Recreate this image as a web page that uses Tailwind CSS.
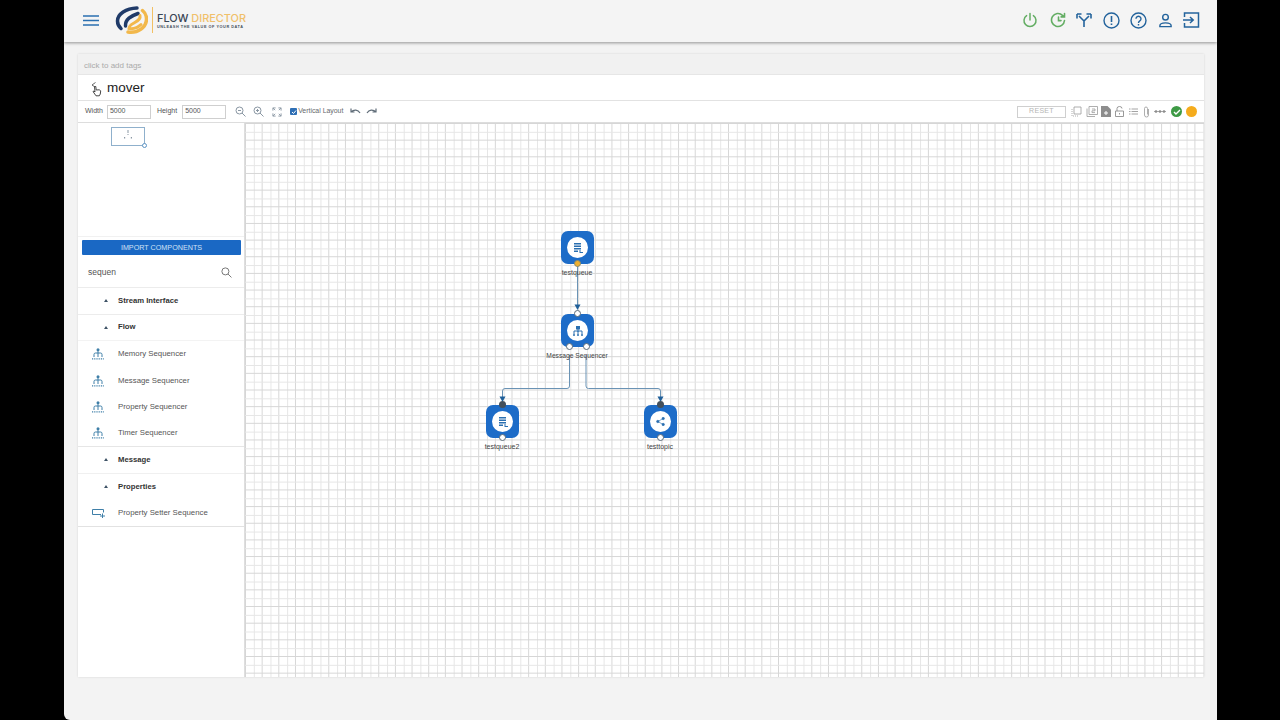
<!DOCTYPE html>
<html lang="en">
<head>
    <meta charset="UTF-8">
    <meta name="viewport" content="width=device-width,initial-scale=1.0">
    <title>Flow Director</title>
    <script src="https://cdn.jsdelivr.net/npm/@tailwindcss/browser@4"></script>
</head>

<body class="bg-black h-[720px] overflow-hidden font-['Liberation_Sans',sans-serif]">
<div class="ml-[64px] w-[1153px] h-[720px] bg-[#f3f3f3] rounded-bl-md flex flex-col">

    <!-- Top bar -->
    <header class="h-[42px] shrink-0 bg-[#f4f4f4] shadow-[0_1px_3px_rgba(0,0,0,0.4)] flex items-center pl-[19px] pr-[17px] pb-[2px]">
        <svg class="w-[16px] h-[11px]" viewBox="0 0 16 11" fill="none" stroke="#2a6fb0" stroke-width="1.5">
            <path d="M0 1h16M0 5.500h16M0 10h16"/>
        </svg>
        <svg class="ml-[16px] w-[33px] h-[28px]" viewBox="0 0 33 28" fill="none" stroke-linecap="round">
            <path d="M22 2C11 2.500 2.500 8 2.500 15c0 3 1.200 5.500 3.500 7.500" stroke="#1f3a68" stroke-width="3.500"/>
            <path d="M23 7.500C16 10 10 13 10.500 20" stroke="#1f3a68" stroke-width="3.500"/>
            <path d="M13 26c10 1.500 18.500-5 18.500-13 0-3.500-1.500-6.500-4-8.500" stroke="#f2b84b" stroke-width="3.500"/>
            <path d="M25 9.500c1 4-3 6-6 7.500-3 1.500-5 3-5 5.500 4 .5 9-1 12-4" stroke="#f2b84b" stroke-width="3"/>
        </svg>
        <div class="ml-[4px] w-px h-[26px] bg-[#f2c063]"></div>
        <div class="ml-[4px] flex flex-col">
            <div class="font-['Inter',sans-serif] font-medium text-[10.900px] leading-[12px] mt-[1px] whitespace-nowrap"><span class="text-[#3a4654]">FLOW</span> <span class="text-[#f0c06a]">DIRECTOR</span></div>
            <div class="text-[3.800px] leading-[5px] mt-[1px] font-bold tracking-[0.55px] text-[#44505c] whitespace-nowrap">UNLEASH THE VALUE OF YOUR DATA</div>
        </div>
        <div class="ml-auto flex items-center gap-[10.5px]">
            <!-- power -->
            <svg class="-ml-[1px] mr-[1px] w-[16px] h-[16px]" viewBox="0 0 16 16" fill="none" stroke="#63ad63" stroke-width="1.5" stroke-linecap="round">
                <path d="M8 1.500v6.500M4.600 3.600a6 6 0 1 0 6.800 0"/>
            </svg>
            <!-- restart -->
            <svg class="w-[16px] h-[16px]" viewBox="0 0 16 16" fill="none" stroke="#63ad63" stroke-width="1.600" stroke-linecap="round">
                <path d="M14.500 8.500a6.500 6.500 0 1 1-2-5.200L14 4.500M14.500 1.500v3.400h-3.400M8.500 5v3.600h2.500"/>
            </svg>
            <!-- split -->
            <svg class="w-[16px] h-[16px]" viewBox="0 0 16 16" fill="none" stroke="#23639c" stroke-width="1.600">
                <path d="M8 15V9L3 4M8 9l5-5M1 2h4.500M1 2v4.500M15 2h-4.500M15 2v4.500"/>
            </svg>
            <!-- alert -->
            <svg class="w-[17px] h-[17px]" viewBox="0 0 17 17" fill="none" stroke="#23639c" stroke-width="1.400">
                <circle cx="8.500" cy="8.500" r="7.500"/>
                <path d="M8.500 4v6M8.500 11.500v1.600" stroke-width="1.600"/>
            </svg>
            <!-- help -->
            <svg class="w-[17px] h-[17px]" viewBox="0 0 17 17" fill="none" stroke="#23639c" stroke-width="1.400">
                <circle cx="8.500" cy="8.500" r="7.500"/>
                <path d="M6 6.800a2.500 2.500 0 1 1 3.800 2.100c-.9.600-1.300 1-1.300 2M8.500 12v1.400"/>
            </svg>
            <!-- user -->
            <svg class="w-[15px] h-[15px]" viewBox="0 0 16 16" fill="none" stroke="#23639c" stroke-width="1.500">
                <circle cx="8" cy="4.500" r="3"/>
                <path d="M2 14.500v-1c0-2 2.500-3 6-3s6 1 6 3v1z"/>
            </svg>
            <!-- logout -->
            <svg class="w-[17px] h-[16px]" viewBox="0 0 17 16" fill="none" stroke="#23639c" stroke-width="1.500">
                <path d="M1.500 5V1h14v14h-14v-4M0 8h10M7 5l3.200 3L7 11"/>
            </svg>
        </div>
    </header>

    <!-- Editor card -->
    <main class="ml-[14px] mt-[12px] w-[1126px] h-[623px] flex flex-col shrink-0 shadow-[0_0_2px_rgba(0,0,0,0.12)]">
        <div class="h-[21px] shrink-0 bg-[#f1f1f1] border-b border-[#e6e6e6] flex items-center pl-[6px] pt-[3px] text-[8px] text-[#aaaaaa]">click to add tags</div>

        <div class="h-[26px] shrink-0 bg-white border-b border-[#e2e2e2] flex items-center pl-[13px] relative">
            <!-- back chevron with the hand pointer over it -->
            <svg class="w-[11px] h-[15px] mt-[3px]" viewBox="0 0 11 15" fill="none">
                <path d="M4.500 .5L1 3l3 2" stroke="#555" stroke-width="0.900"/>
                <path d="M3.500 4.500h1.300l.4 3.500 3-.2 1.500 1-.4 3.200-1 1.800H5L2 9.500l1-.5 1 1z" fill="#fff" stroke="#333" stroke-width="0.900"/>
            </svg>
            <span class="ml-[5px] text-[13.500px] text-[#222] leading-none">mover</span>
        </div>

        <!-- Toolbar -->
        <div class="h-[22px] shrink-0 bg-white border-b border-[#dddddd] flex items-center pl-[7px] pr-[7px] text-[7px] text-[#555]">
            <span>Width</span>
            <div class="ml-[4px] w-[44px] h-[14px] border border-[#cfcfcf] flex items-center pl-[2px]">5000</div>
            <span class="ml-[6px]">Height</span>
            <div class="ml-[5px] w-[44px] h-[14px] border border-[#cfcfcf] flex items-center pl-[2px]">5000</div>
            <svg class="ml-[9px] w-[11px] h-[11px]" viewBox="0 0 11 11" fill="none" stroke="#8a97a3" stroke-width="1">
                <circle cx="4.500" cy="4.500" r="3.500"/><path d="M7 7l3.500 3.500M3 4.500h3"/>
            </svg>
            <svg class="ml-[7px] w-[11px] h-[11px]" viewBox="0 0 11 11" fill="none" stroke="#8a97a3" stroke-width="1">
                <circle cx="4.500" cy="4.500" r="3.500"/><path d="M7 7l3.500 3.500M3 4.500h3M4.500 3v3"/>
            </svg>
            <svg class="ml-[8px] w-[10px] h-[10px]" viewBox="0 0 11 11" fill="none" stroke="#8a97a3" stroke-width="1">
                <path d="M1 4V1h3M1 1l2.500 2.500M7 1h3v3M10 1L7.500 3.500M10 7v3H7M10 10L7.500 7.500M4 10H1V7M1 10l2.500-2.500"/>
            </svg>
            <span class="ml-[8px] w-[7px] h-[7px] rounded-[1px] bg-[#2f6fb5] flex items-center justify-center">
                <svg class="w-[6px] h-[6px]" viewBox="0 0 6 6" fill="none" stroke="#fff" stroke-width="1"><path d="M1 3l1.500 1.500L5 1.500"/></svg>
            </span>
            <span class="ml-[1px] text-[#66696d] text-[6.900px]">Vertical Layout</span>
            <svg class="ml-[7px] w-[11px] h-[7px]" viewBox="0 0 11 7" fill="none" stroke="#5f6c78" stroke-width="1.200">
                <path d="M1 .5v3.500h3.500M1 4c3-3 7-2.500 9 1"/>
            </svg>
            <svg class="ml-[5px] w-[11px] h-[7px]" viewBox="0 0 11 7" fill="none" stroke="#5f6c78" stroke-width="1.200">
                <path d="M10 .5v3.500H6.500M10 4C7 1 3 1.500 1 5"/>
            </svg>

            <div class="ml-auto flex items-center">
                <div class="w-[49px] h-[12px] border border-[#cfcfcf] flex items-center justify-center text-[7px] tracking-[0.3px] text-[#b5b5b5]">RESET</div>
                <svg class="ml-[5px] w-[11px] h-[11px]" viewBox="0 0 11 11" fill="none" stroke="#9a9a9a" stroke-width="0.800">
                    <path d="M3 1h7v7H3z"/><path d="M1 3v7h6" stroke-dasharray="1 1"/>
                </svg>
                <svg class="ml-[4px] w-[12px] h-[11px]" viewBox="0 0 12 11" fill="none" stroke="#9a9a9a" stroke-width="0.800">
                    <path d="M3 .5h8.500v8H3zM1 2.500v8h8M6 3h3v1.800H6v1.800h3"/>
                </svg>
                <svg class="ml-[3px] w-[10px] h-[11px]" viewBox="0 0 10 11">
                    <path d="M0 0h6.500L10 3.500V11H0z" fill="#8d8d8d"/>
                    <path d="M5 5v4M3 7h4" stroke="#fff" stroke-width="1"/>
                </svg>
                <svg class="ml-[4px] w-[9px] h-[11px]" viewBox="0 0 9 11" fill="none" stroke="#8d8d8d" stroke-width="0.900">
                    <path d="M.5 5h8v5.500h-8zM2 5V2.500a2.500 2 0 0 1 5 0"/><path d="M4.500 7v1.500"/>
                </svg>
                <svg class="ml-[5px] w-[9px] h-[7px]" viewBox="0 0 9 7" fill="none" stroke="#8d8d8d" stroke-width="0.800">
                    <path d="M2.500 1H9M2.500 3.500H9M2.500 6H9M0 1h1.500M0 3.500h1.500M0 6h1.500"/>
                </svg>
                <svg class="ml-[5px] w-[7px] h-[12px]" viewBox="0 0 7 12" fill="none" stroke="#9a9a9a" stroke-width="0.800">
                    <path d="M5.500 3v6a2 2 0 0 1-4 0V2.500a1.500 1.500 0 0 1 3 0V8.500"/>
                </svg>
                <svg class="ml-[4px] w-[12px] h-[5px]" viewBox="0 0 12 5" fill="#8d8d8d" stroke="#8d8d8d" stroke-width="0.700">
                    <path d="M0 2.500h12"/><circle cx="2" cy="2.500" r="1"/><circle cx="6" cy="2.500" r="1"/><circle cx="10" cy="2.500" r="1"/>
                </svg>
                <span class="ml-[5px] w-[11px] h-[11px] rounded-full bg-[#3e9a45] flex items-center justify-center">
                    <svg class="w-[8px] h-[8px]" viewBox="0 0 8 8" fill="none" stroke="#fff" stroke-width="1.400"><path d="M1 4l2 2 4-4"/></svg>
                </span>
                <span class="ml-[4px] w-[11px] h-[11px] rounded-full bg-[#f5ac1d]"></span>
            </div>
        </div>

        <div class="flex flex-1 min-h-0">
            <!-- Palette -->
            <aside class="w-[167px] shrink-0 bg-white border-r border-[#dedede] flex flex-col">
                <div class="h-[113px] shrink-0 relative">
                    <div class="absolute left-[33px] top-[4px] w-[34px] h-[19px] border border-[#8fb0cc] flex items-start justify-center">
                        <svg class="w-[10px] h-[10px] mt-[2px]" viewBox="0 0 10 10" fill="#8a97a3"><path d="M4.500 0h1v3h-1zM4.500 4h1v1h-1zM1 7h1.200v1.500H1zM7.800 7H9v1.500H7.800z"/></svg>
                    </div>
                    <span class="absolute left-[64px] top-[20px] w-[5px] h-[5px] rounded-full bg-white border border-[#5d94c4]"></span>
                </div>
                <div class="h-[4px] shrink-0 border-t border-[#f1f1f1]"></div>
                <div class="ml-[4px] mr-[3px] h-[15px] shrink-0 bg-[#1a68c4] rounded-[1px] flex items-center justify-center pt-[1px] text-[7.200px] text-[#cfe0f5]">IMPORT COMPONENTS</div>
                <div class="h-[33px] shrink-0 border-b border-[#ececec] flex items-center pl-[10px] pr-[12px] pt-[2px] text-[8.500px] text-[#555] justify-between">
                    <span>sequen</span>
                    <svg class="w-[11px] h-[11px]" viewBox="0 0 10 10" fill="none" stroke="#777" stroke-width="0.900">
                        <circle cx="4" cy="4" r="3.200"/><path d="M6.400 6.400L9.500 9.500"/>
                    </svg>
                </div>

                <div class="h-[26.500px] shrink-0 border-b border-[#ececec] flex items-center pl-[26px] text-[7.700px] font-bold text-[#333]">
                    <span class="w-0 h-0 border-x-[2.500px] border-x-transparent border-b-[3px] border-b-[#3e5266]"></span>
                    <span class="ml-[10px]">Stream Interface</span>
                </div>
                <div class="h-[26.500px] shrink-0 border-b border-[#f3f3f3] flex items-center pl-[26px] text-[7.700px] font-bold text-[#333]">
                    <span class="w-0 h-0 border-x-[2.500px] border-x-transparent border-b-[3px] border-b-[#3e5266]"></span>
                    <span class="ml-[10px]">Flow</span>
                </div>
                <div class="h-[26.500px] shrink-0 flex items-center pl-[14px] text-[7.800px] text-[#555]">
                    <svg class="w-[12px] h-[12px]" viewBox="0 0 12 12" fill="none" stroke="#3f7fa8" stroke-width="1">
                        <circle cx="6" cy="1.800" r="1.500" fill="#3f7fa8" stroke="none"/><path d="M6 3v6M2 9V6.500Q2 5 3.500 5h5Q10 5 10 6.500V9"/><path d="M0 10.800h12" stroke-width="1.200" stroke-dasharray="1 .8"/>
                    </svg>
                    <span class="ml-[14px]">Memory Sequencer</span>
                </div>
                <div class="h-[26.500px] shrink-0 flex items-center pl-[14px] text-[7.800px] text-[#555]">
                    <svg class="w-[12px] h-[12px]" viewBox="0 0 12 12" fill="none" stroke="#3f7fa8" stroke-width="1">
                        <circle cx="6" cy="1.800" r="1.500" fill="#3f7fa8" stroke="none"/><path d="M6 3v6M2 9V6.500Q2 5 3.500 5h5Q10 5 10 6.500V9"/><path d="M0 10.800h12" stroke-width="1.200" stroke-dasharray="1 .8"/>
                    </svg>
                    <span class="ml-[14px]">Message Sequencer</span>
                </div>
                <div class="h-[26.500px] shrink-0 flex items-center pl-[14px] text-[7.800px] text-[#555]">
                    <svg class="w-[12px] h-[12px]" viewBox="0 0 12 12" fill="none" stroke="#3f7fa8" stroke-width="1">
                        <circle cx="6" cy="1.800" r="1.500" fill="#3f7fa8" stroke="none"/><path d="M6 3v6M2 9V6.500Q2 5 3.500 5h5Q10 5 10 6.500V9"/><path d="M0 10.800h12" stroke-width="1.200" stroke-dasharray="1 .8"/>
                    </svg>
                    <span class="ml-[14px]">Property Sequencer</span>
                </div>
                <div class="h-[26.500px] shrink-0 border-b border-[#e6e6e6] flex items-center pl-[14px] text-[7.800px] text-[#555]">
                    <svg class="w-[12px] h-[12px]" viewBox="0 0 12 12" fill="none" stroke="#3f7fa8" stroke-width="1">
                        <circle cx="6" cy="1.800" r="1.500" fill="#3f7fa8" stroke="none"/><path d="M6 3v6M2 9V6.500Q2 5 3.500 5h5Q10 5 10 6.500V9"/><path d="M0 10.800h12" stroke-width="1.200" stroke-dasharray="1 .8"/>
                    </svg>
                    <span class="ml-[14px]">Timer Sequencer</span>
                </div>
                <div class="h-[26.500px] shrink-0 border-b border-[#f0f0f0] flex items-center pl-[26px] text-[7.700px] font-bold text-[#333]">
                    <span class="w-0 h-0 border-x-[2.500px] border-x-transparent border-b-[3px] border-b-[#3e5266]"></span>
                    <span class="ml-[10px]">Message</span>
                </div>
                <div class="h-[26.500px] shrink-0 flex items-center pl-[26px] text-[7.700px] font-bold text-[#333]">
                    <span class="w-0 h-0 border-x-[2.500px] border-x-transparent border-b-[3px] border-b-[#3e5266]"></span>
                    <span class="ml-[10px]">Properties</span>
                </div>
                <div class="h-[27px] shrink-0 border-b border-[#e2e2e2] flex items-center pl-[14px] text-[7.800px] text-[#555]">
                    <svg class="w-[13px] h-[10px]" viewBox="0 0 13 10" fill="none" stroke="#3f7fa8" stroke-width="1">
                        <path d="M9 6.500H.5v-5h11v3M8 8h5M10.500 5.500v4.500"/>
                    </svg>
                    <span class="ml-[13px]">Property Setter Sequence</span>
                </div>
            </aside>

            <!-- Canvas -->
            <section class="relative flex-1 overflow-hidden bg-white bg-[linear-gradient(#d6d6d6_1px,transparent_1px,transparent_8.330px,#e6e6e6_8.330px,#e6e6e6_9.330px,transparent_9.330px),linear-gradient(90deg,#d6d6d6_1px,transparent_1px,transparent_8.330px,#e6e6e6_8.330px,#e6e6e6_9.330px,transparent_9.330px)] bg-size-[16.660px_16.660px]">
                <!-- links -->
                <svg class="absolute left-0 top-0 w-[958px] h-[554px]" viewBox="0 0 958 554" fill="none" stroke="#6a93b5" stroke-width="1">
                    <path d="M332.500 142V184"/>
                    <path d="M324.500 232V263q0 2.500-2.500 2.500H260q-2.500 0-2.500 2.500V276"/>
                    <path d="M341 232V263q0 2.500 2.500 2.500H413q2.500 0 2.500 2.500V276"/>
                    <path d="M329.500 181.500h6l-3 5.500z" fill="#1f5f99" stroke="none"/>
                    <path d="M254.500 273.500h6l-3 5.500z" fill="#1f5f99" stroke="none"/>
                    <path d="M412.500 273.500h6l-3 5.500z" fill="#1f5f99" stroke="none"/>
                </svg>

                <!-- testqueue -->
                <div class="absolute left-[316px] top-[108px] w-[33px] h-[33px] rounded-[7px] bg-[#1d6cc8] flex items-center justify-center">
                    <span class="w-[21px] h-[21px] rounded-full bg-white flex items-center justify-center">
                        <svg class="w-[10px] h-[10px]" viewBox="0 0 10 10" fill="#2a6fb0"><path d="M1 0h7v1.500H1zM1 2.500h7V4H1zM1 5h7v1.500H1zM1 7.500h4V9H1zM6.500 7h1v3h-1zM7.500 9H10v1H7.500z"/></svg>
                    </span>
                </div>
                <span class="absolute left-[329px] top-[137px] w-[7px] h-[7px] rounded-full bg-[#efb02f] border border-[#8a8a6a]"></span>
                <div class="absolute left-[292px] top-[145px] w-[80px] text-center text-[7px] leading-[9px] text-[#444]">testqueue</div>

                <!-- Message Sequencer -->
                <div class="absolute left-[316px] top-[191px] w-[33px] h-[33px] rounded-[7px] bg-[#1d6cc8] flex items-center justify-center">
                    <span class="w-[21px] h-[21px] rounded-full bg-white flex items-center justify-center">
                        <svg class="w-[10px] h-[10px]" viewBox="0 0 10 10" fill="none" stroke="#2a6fb0" stroke-width="1">
                            <rect x="3.500" y="0.500" width="3" height="2.500" fill="#2a6fb0"/><path d="M5 3v3M1 8V5h8v3M5 5v3"/><path d="M0 9h2M4 9h2M8 9h2" stroke-width="1.600"/>
                        </svg>
                    </span>
                </div>
                <span class="absolute left-[329px] top-[187px] w-[7px] h-[7px] rounded-full bg-white border border-[#5a6a78]"></span>
                <span class="absolute left-[321px] top-[220px] w-[7px] h-[7px] rounded-full bg-white border border-[#5a6a78]"></span>
                <span class="absolute left-[338px] top-[220px] w-[7px] h-[7px] rounded-full bg-white border border-[#5a6a78]"></span>
                <div class="absolute left-[282px] top-[228px] w-[100px] text-center text-[6.700px] leading-[9px] text-[#444]">Message Sequencer</div>

                <!-- testqueue2 -->
                <div class="absolute left-[241px] top-[282px] w-[33px] h-[33px] rounded-[7px] bg-[#1d6cc8] flex items-center justify-center">
                    <span class="w-[21px] h-[21px] rounded-full bg-white flex items-center justify-center">
                        <svg class="w-[10px] h-[10px]" viewBox="0 0 10 10" fill="#2a6fb0"><path d="M1 0h7v1.500H1zM1 2.500h7V4H1zM1 5h7v1.500H1zM1 7.500h4V9H1zM6.500 7h1v3h-1zM7.500 9H10v1H7.500z"/></svg>
                    </span>
                </div>
                <span class="absolute left-[254px] top-[278px] w-[7px] h-[7px] rounded-full bg-[#44505c]"></span>
                <span class="absolute left-[254px] top-[311px] w-[7px] h-[7px] rounded-full bg-white border border-[#5a6a78]"></span>
                <div class="absolute left-[217px] top-[319px] w-[80px] text-center text-[7px] leading-[9px] text-[#444]">testqueue2</div>

                <!-- testtopic -->
                <div class="absolute left-[399px] top-[282px] w-[33px] h-[33px] rounded-[7px] bg-[#1d6cc8] flex items-center justify-center">
                    <span class="w-[21px] h-[21px] rounded-full bg-white flex items-center justify-center">
                        <svg class="w-[9px] h-[9px]" viewBox="0 0 9 9" fill="#2a6fb0" stroke="#2a6fb0" stroke-width="0.600">
                            <circle cx="7.200" cy="1.500" r="1.200"/><circle cx="1.800" cy="4.500" r="1.200"/><circle cx="7.200" cy="7.500" r="1.200"/><path d="M7.200 1.500L1.800 4.500l5.400 3" fill="none"/>
                        </svg>
                    </span>
                </div>
                <span class="absolute left-[412px] top-[278px] w-[7px] h-[7px] rounded-full bg-[#44505c]"></span>
                <span class="absolute left-[412px] top-[311px] w-[7px] h-[7px] rounded-full bg-white border border-[#5a6a78]"></span>
                <div class="absolute left-[375px] top-[319px] w-[80px] text-center text-[7px] leading-[9px] text-[#444]">testtopic</div>
            </section>
        </div>
    </main>
</div>
</body>
</html>
